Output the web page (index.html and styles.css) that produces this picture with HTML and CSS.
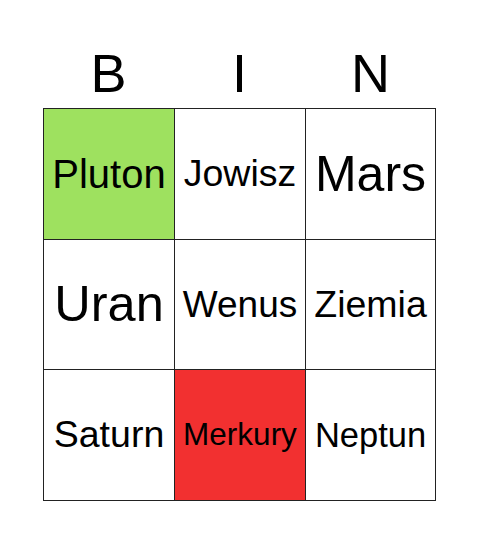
FILE: index.html
```html
<!DOCTYPE html>
<html lang="pl">
<head>
<meta charset="utf-8">
<title>Bingo</title>
<link rel="stylesheet" href="styles.css">
</head>
<body>
<div class="card">
  <div class="head">
    <div class="letter">B</div>
    <div class="letter">I</div>
    <div class="letter">N</div>
  </div>
  <div class="grid">
    <div class="cell green"><span class="w-pluton">Pluton</span></div>
    <div class="cell"><span class="w-jowisz">Jowisz</span></div>
    <div class="cell"><span class="w-mars">Mars</span></div>
    <div class="cell"><span class="w-uran">Uran</span></div>
    <div class="cell"><span class="w-wenus">Wenus</span></div>
    <div class="cell"><span class="w-ziemia">Ziemia</span></div>
    <div class="cell"><span class="w-saturn">Saturn</span></div>
    <div class="cell red"><span class="w-merkury">Merkury</span></div>
    <div class="cell"><span class="w-neptun">Neptun</span></div>
  </div>
</div>
</body>
</html>
```
FILE: styles.css
```css
html, body {
  margin: 0;
  padding: 0;
  background: #ffffff;
}
body {
  font-family: "Liberation Sans", Arial, sans-serif;
  color: #000;
}
.card {
  width: 393px;
  margin: 0 auto;
}
.head {
  display: grid;
  grid-template-columns: 131px 131px 131px;
  padding-top: 43px;
  height: 65px;
}
.letter {
  font-size: 54px;
  line-height: 60px;
  text-align: center;
}
.grid {
  display: grid;
  grid-template-columns: 131px 131px 130px;
  grid-template-rows: 131px 130px 131px;
  border-left: 1px solid #222;
  border-top: 1px solid #222;
}
.cell {
  border-right: 1px solid #222;
  border-bottom: 1px solid #222;
  display: flex;
  align-items: center;
  justify-content: center;
  white-space: nowrap;
  line-height: 1;
}
.green { background: #9ee15f; }
.red { background: #f23030; }
.w-pluton { font-size: 40px; }
.w-jowisz { font-size: 37.5px; }
.w-mars { font-size: 50px; }
.w-uran { font-size: 50.5px; }
.w-wenus { font-size: 37px; }
.w-ziemia { font-size: 37.5px; }
.w-saturn { font-size: 37.5px; }
.w-merkury { font-size: 31.5px; }
.w-neptun { font-size: 34.5px; }
```
